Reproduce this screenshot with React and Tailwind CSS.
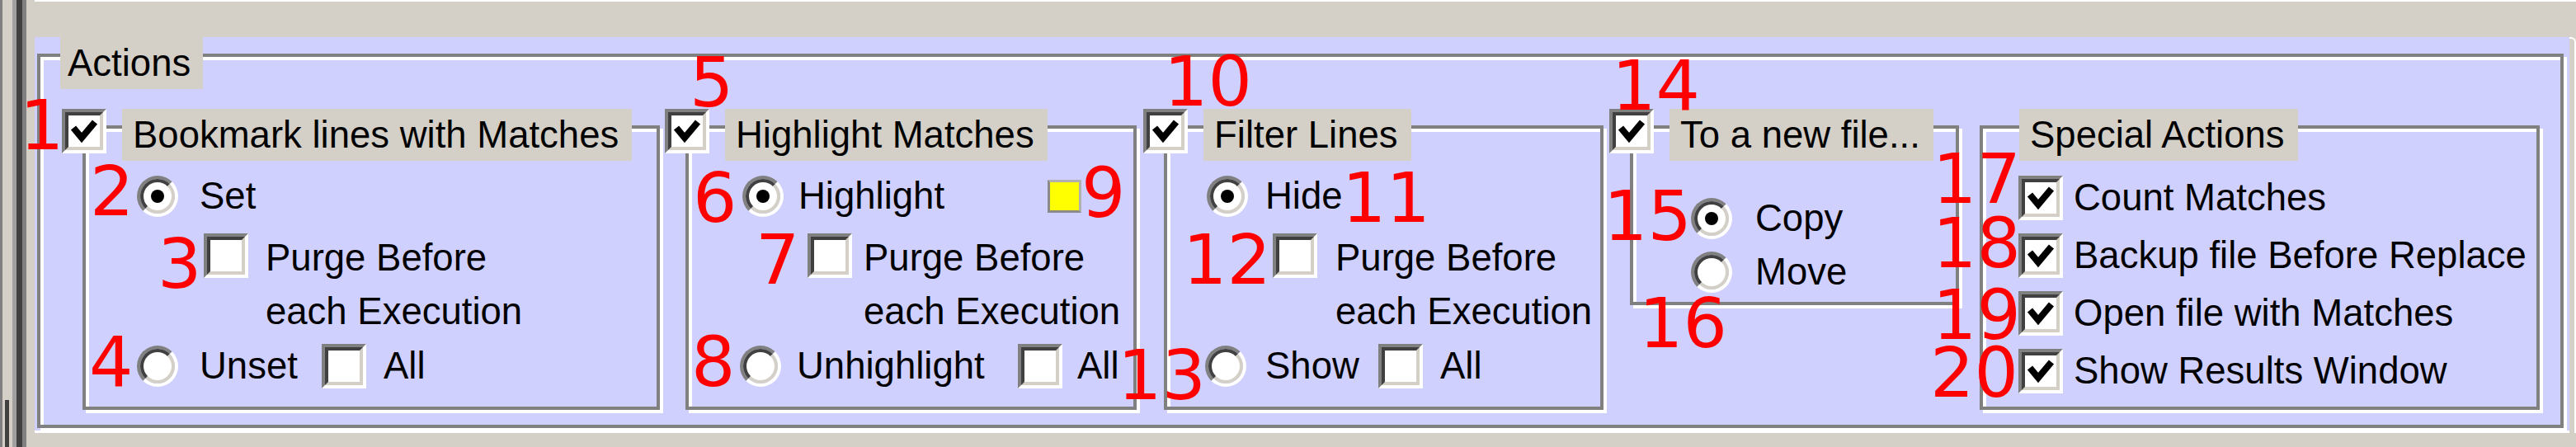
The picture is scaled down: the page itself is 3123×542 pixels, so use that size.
import React from 'react'

const ui = { fontFamily: '"Liberation Sans", Arial, sans-serif' }
const num = { fontFamily: '"DejaVu Sans", sans-serif' }

// red annotation numbers, page coordinates
const marks = [
  ['1', 24, 110], ['2', 109, 190], ['3', 191, 278], ['4', 108, 397],
  ['5', 836, 58], ['6', 840, 198], ['7', 916, 273], ['8', 838, 397],
  ['9', 1311, 192], ['10', 1411, 57], ['11', 1627, 198], ['12', 1434, 273],
  ['13', 1355, 413], ['14', 1954, 62], ['15', 1944, 220], ['16', 1987, 350],
  ['17', 2343, 175], ['18', 2343, 253], ['19', 2343, 340], ['20', 2340, 410],
]

function Check({ checked, className = '' }){
  return (
    <div className={`w-[54px] h-[54px] shrink-0 border-[4px] border-t-[#808080] border-l-[#808080] border-b-white border-r-white ${className}`}>
      <div className="w-full h-full border-[4px] border-t-[#404040] border-l-[#404040] border-b-[#d4d0c8] border-r-[#d4d0c8] bg-white">
        {checked && (
          <svg width="38" height="38" viewBox="0 0 38 38">
            <polyline points="6,15 16,27 32,8" fill="none" stroke="#000" strokeWidth="8" />
          </svg>
        )}
      </div>
    </div>
  )
}

function Radio({ checked, className = '' }){
  return (
    <div className={`w-[50px] h-[50px] shrink-0 rounded-full border-[4px] border-t-[#808080] border-l-[#808080] border-b-white border-r-white ${className}`}>
      <div className="w-full h-full rounded-full border-[4px] border-t-[#404040] border-l-[#404040] border-b-[#d4d0c8] border-r-[#d4d0c8] bg-white flex items-center justify-center">
        {checked && <div className="w-[16px] h-[16px] rounded-full bg-black" />}
      </div>
    </div>
  )
}

function Group({ title, check, className = '', children }){
  return (
    <div className={`relative shrink-0 border-[4px] border-[#808080] shadow-[inset_4px_4px_0_#fff,4px_4px_0_#fff] ${className}`}>
      {check && <Check checked className="absolute left-[-29px] top-[-24px]" />}
      <div className="absolute left-[44px] top-[-24px] h-[63px] leading-[63px] pl-[13px] pr-[16px] bg-[#d4d0c8] whitespace-nowrap">{title}</div>
      {children}
    </div>
  )
}

export default function App(){
  return (
    <div className="relative w-[3123px] h-[542px] flex bg-[#d4d0c8] text-black text-[45.5px] overflow-hidden" style={ui}>
      {/* splitter on the left */}
      <div className="w-[42px] h-full flex shrink-0">
        <div className="w-[3px] bg-[#808080]" />
        <div className="w-[12px] flex flex-col justify-end"><div className="ml-[3px] w-[5px] h-[57px] bg-[#404040]" /></div>
        <div className="w-[5px] bg-[#a0a0a0]" />
        <div className="w-[7px] bg-[#404040]" />
        <div className="w-[5px] bg-[#808080]" />
        <div className="w-[10px]" />
      </div>

      <div className="flex-1 flex flex-col">
        <div className="h-[45px] border-t-[2px] border-white" />
        <div className="flex">
          <div className="w-[3073px] h-[480px] bg-[#d0d0ff] border-b-[3px] border-white pl-[3px] pt-[20px]">
            {/* Actions group */}
            <div className="relative w-[3063px] h-[454px] border-[4px] border-[#808080] shadow-[inset_4px_4px_0_#fff,4px_4px_0_#fff] pl-[51px] pt-[83px]">
              <div className="absolute left-[24px] top-[-24px] h-[63px] leading-[63px] pl-[9px] pr-[15px] bg-[#d4d0c8]">Actions</div>

              <div className="flex items-start">
                <Group title="Bookmark lines with Matches" check className="w-[700px] h-[345px]">
                  <div className="mt-[54px] h-[56px] flex items-center leading-none">
                    <Radio checked className="ml-[62px]" />
                    <span className="ml-[26px]">Set</span>
                  </div>
                  <div className="mt-[14px] flex items-start">
                    <Check className="ml-[143px] mt-[3px]" />
                    <div className="ml-[21px] leading-[65px]">Purge Before<br />each Execution</div>
                  </div>
                  <div className="mt-[6px] h-[56px] flex items-center leading-none">
                    <Radio className="ml-[62px]" />
                    <span className="ml-[26px] w-[148px]">Unset</span>
                    <Check />
                    <span className="ml-[21px]">All</span>
                  </div>
                </Group>

                <Group title="Highlight Matches" check className="ml-[31px] w-[547px] h-[345px]">
                  <div className="mt-[54px] h-[56px] flex items-center leading-none">
                    <Radio checked className="ml-[65px]" />
                    <span className="ml-[18px] w-[302px]">Highlight</span>
                    <div className="w-[41px] h-[40px] bg-[#ffff00] border-[3px] border-[#8a8a8a] border-t-[#b0b0b0] border-r-[#b0b0b0]" />
                  </div>
                  <div className="mt-[14px] flex items-start">
                    <Check className="ml-[144px] mt-[3px]" />
                    <div className="ml-[14px] leading-[65px]">Purge Before<br />each Execution</div>
                  </div>
                  <div className="mt-[6px] h-[56px] flex items-center leading-none">
                    <Radio className="ml-[62px]" />
                    <span className="ml-[19px] w-[268px] whitespace-nowrap">Unhighlight</span>
                    <Check />
                    <span className="ml-[18px]">All</span>
                  </div>
                </Group>

                <Group title="Filter Lines" check className="ml-[33px] w-[533px] h-[345px]">
                  <div className="mt-[54px] h-[56px] flex items-center leading-none">
                    <Radio checked className="ml-[48px]" />
                    <span className="ml-[21px]">Hide</span>
                  </div>
                  <div className="mt-[14px] flex items-start">
                    <Check className="ml-[128px] mt-[3px]" />
                    <div className="ml-[22px] leading-[65px]">Purge Before<br />each Execution</div>
                  </div>
                  <div className="mt-[6px] h-[56px] flex items-center leading-none">
                    <Radio className="ml-[46px]" />
                    <span className="ml-[23px] w-[137px]">Show</span>
                    <Check />
                    <span className="ml-[21px]">All</span>
                  </div>
                </Group>

                <Group title="To a new file..." check className="ml-[32px] w-[399px] h-[218px]">
                  <div className="mt-[81px] h-[56px] flex items-center leading-none">
                    <Radio checked className="ml-[70px]" />
                    <span className="ml-[28px]">Copy</span>
                  </div>
                  <div className="mt-[9px] h-[56px] flex items-center leading-none">
                    <Radio className="ml-[70px]" />
                    <span className="ml-[28px]">Move</span>
                  </div>
                </Group>

                <Group title="Special Actions" className="ml-[25px] w-[679px] h-[345px]">
                  <div className="mt-[57px] flex flex-col gap-[16px] leading-none">
                    {['Count Matches', 'Backup file Before Replace', 'Open file with Matches', 'Show Results Window'].map(t => (
                      <div key={t} className="h-[54px] flex items-center">
                        <Check checked className="ml-[43px]" />
                        <span className="ml-[13px] whitespace-nowrap">{t}</span>
                      </div>
                    ))}
                  </div>
                </Group>
              </div>
            </div>
          </div>
          <div className="flex-1 rounded-tr-[6px] border-t-[2px] border-r-[2px] border-white" />
        </div>
        <div className="flex-1" />
      </div>

      {marks.map(([n, x, y]) => (
        <div key={n} className="absolute text-[84px] leading-none text-[#ff0000]" style={{ ...num, left: x, top: y }}>{n}</div>
      ))}
    </div>
  )
}
